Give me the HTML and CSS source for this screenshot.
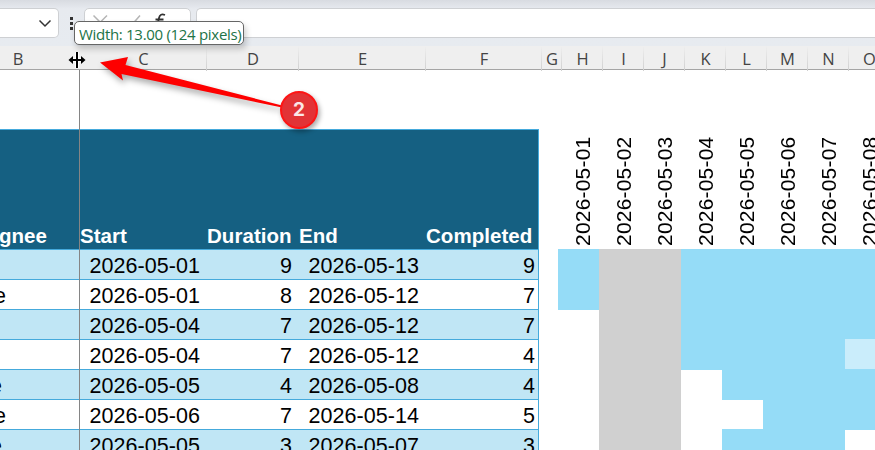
FILE: index.html
```html
<!DOCTYPE html>
<html lang="en">
<head>
<meta charset="utf-8">
<title>Project schedule</title>
<link rel="stylesheet" href="styles.css">
</head>
<body>
<div class="app">
  <div class="formula-bar">
    <div class="box name-box"><svg width="14" height="9" viewBox="0 0 14 9"><path d="M1.500 1.500 7 7l5.500-5.500" fill="none" stroke="#333" stroke-width="1.500"/></svg></div>
    <div class="dots"><i></i><i></i><i></i></div>
    <div class="box fx-box">
      <svg width="104" height="27" viewBox="0 0 104 27"><path d="M8.500 6.500 22 20M22 6.500 8.500 20M40 14l4 5L55 6.500" fill="none" stroke="#b5b5b5" stroke-width="1.500"/><path d="M80 6q-5-2-6 3l-2 9M70.500 10.500h8" fill="none" stroke="#333" stroke-width="1.800"/></svg>
    </div>
    <div class="box input-box"></div>
  </div>
  <div class="col-heads">
    <div class="first">B</div><div>C</div><div>D</div><div>E</div><div>F</div><div>G</div><div>H</div><div>I</div><div>J</div><div>K</div><div>L</div><div>M</div><div>N</div><div>O</div>
  </div>
  <div class="sheet">
    <div class="table">
      <div class="row thead"><span class="assignee">Assignee</span><span>Start</span><span>Duration</span><span>End</span><span>Completed</span></div>
      <div class="row band"><span></span><span>2026-05-01</span><span>9</span><span>2026-05-13</span><span>9</span></div>
      <div class="row"><span class="name">e</span><span>2026-05-01</span><span>8</span><span>2026-05-12</span><span>7</span></div>
      <div class="row band"><span></span><span>2026-05-04</span><span>7</span><span>2026-05-12</span><span>7</span></div>
      <div class="row"><span></span><span>2026-05-04</span><span>7</span><span>2026-05-12</span><span>4</span></div>
      <div class="row band"><span class="name short">e</span><span>2026-05-05</span><span>4</span><span>2026-05-08</span><span>4</span></div>
      <div class="row"><span class="name">e</span><span>2026-05-06</span><span>7</span><span>2026-05-14</span><span>5</span></div>
      <div class="row band"><span class="name short">e</span><span>2026-05-05</span><span>3</span><span>2026-05-07</span><span>3</span></div>
    </div>
    <div class="gantt">
      <div class="day"><time>2026-05-01</time><b class="r2"></b></div>
      <div class="day"><time>2026-05-02</time><b class="off"></b></div>
      <div class="day"><time>2026-05-03</time><b class="off"></b></div>
      <div class="day"><time>2026-05-04</time><b class="r4"></b></div>
      <div class="day"><time>2026-05-05</time><b class="r5"></b><b class="gap"></b><b class="rest"></b></div>
      <div class="day"><time>2026-05-06</time><b class="rest"></b></div>
      <div class="day"><time>2026-05-07</time><b class="rest"></b></div>
      <div class="day"><time>2026-05-08</time><b class="r3"></b><b class="light"></b><b class="r2"></b></div>
    </div>
  </div>
  <div class="guide"></div>
  <svg class="arrow" width="240" height="90" viewBox="90 50 240 90"><path d="M100 62.500 128 57l-2.500 8L282 105.500v2L121.500 74l1.500 6.500Z" fill="#fe0000"/></svg>
  <div class="badge">2</div>
  <div class="tooltip"><span>Width: 13.00 (124 pixels)</span></div>
  <svg class="cursor" width="20" height="20" viewBox="0 0 20 20"><g stroke="#fff" stroke-width="4" fill="#fff"><path d="M10 2v16M4 10h12"/></g><path d="M10 2v16M3 10h14" stroke="#000" stroke-width="2"/><path d="M1.500 10 6 6v8ZM18.500 10 14 6v8Z"/></svg>
</div>
</body>
</html>
```
FILE: styles.css
```css
* { box-sizing: border-box; }
body { margin: 0; background: #fff; }
.app { position: relative; width: 875px; height: 450px; overflow: hidden; font-family: "Liberation Sans", sans-serif; }
.formula-bar { display: flex; align-items: flex-start; height: 46px; padding-top: 8px; background: linear-gradient(#d8dbe1, #e7eaef 9px, #e7ebf0); }
.box { height: 30px; background: #fff; border: 1px solid #ced0d3; border-radius: 5px; }
.name-box { width: 59px; border-left: 0; border-radius: 0 5px 5px 0; display: flex; justify-content: flex-end; align-items: center; padding-right: 6px; }
.dots { width: 25px; padding: 9px 0 0 11px; display: grid; gap: 2px; }
.dots i { width: 3px; height: 3px; background: #333; }
.fx-box { width: 107px; overflow: hidden; }
.input-box { flex: 1; margin-left: 5px; border-right: 0; border-radius: 5px 0 0 5px; }
.col-heads { display: grid; grid-template-columns: 80px 127px 92px 127px 116px 20px repeat(8, 41px); height: 24px; background: #efefef; border-bottom: 1px solid #a5a5a5; color: #444; font: 16.5px/25px "Open Sans", sans-serif; text-align: center; }
.col-heads div { background: linear-gradient(#efefef, #cfcfcf) right / 1px 100% no-repeat; }
.col-heads .first { padding-right: 44px; background: none; }
.sheet { display: flex; padding-top: 59px; }
.table { width: 539px; border-top: 1px solid #45aadc; border-right: 1px solid #45aadc; }
.row { display: grid; grid-template-columns: 80px 120px 92px 127px 116px; height: 30px; border-bottom: 1px solid #45aadc; font-size: 21.5px; line-height: 32px; letter-spacing: .05px; text-align: right; white-space: nowrap; color: #000; }
.row.band { background: #c0e6f5; }
.row.thead { height: 120px; grid-template-columns: 80px 127px 92px 127px 112px; align-items: end; background: #156082; color: #fff; font: bold 20.5px/27px "Liberation Sans", sans-serif; text-align: left; }
.thead .assignee { width: 47px; display: flex; justify-content: flex-end; }
.row .name { width: 6px; display: flex; justify-content: flex-end; }
.row .name.short { width: 2px; }
.gantt { display: flex; margin-left: 19px; }
.day { width: 41px; flex: none; display: flex; flex-direction: column; height: 321px; }
.day time { height: 120px; width: 41px; writing-mode: vertical-rl; transform: rotate(180deg); font-size: 21px; line-height: 49px; letter-spacing: .2px; padding-top: 3px; }
.day b { display: block; flex: none; width: 41px; background: #95dcf7; }
.day .off { flex: 1; background: #d0d0d0; }
.day .r2 { height: 61px; }
.day .r3 { height: 90px; }
.day .r4 { height: 121px; }
.day .r5 { height: 151px; }
.day .gap { height: 29px; background: #fff; }
.day .rest { flex: 1; }
.day .light { height: 30px; background: #caedfb; }
.guide { position: absolute; left: 79px; top: 70px; width: 1px; bottom: 0; background: #858585; }
.arrow { position: absolute; left: 90px; top: 50px; filter: drop-shadow(2px 4px 3px #0005); }
.badge { position: absolute; left: 280px; top: 91px; width: 38px; height: 38px; border: 2px solid #fe1515; border-radius: 50%; background: #e23336; color: #fbe7e7; font: bold 19px/34px Inter, sans-serif; text-align: center; box-shadow: 2px 3px 5px #0005; }
.tooltip { position: absolute; left: 74px; top: 21px; width: 170px; height: 24px; border: 1px solid #666; border-radius: 5px; background: #fff; box-shadow: 2px 4px 6px #0003; padding-left: 4px; color: #217346; font: 15px/24px "Open Sans", sans-serif; letter-spacing: -.3px; white-space: nowrap; }
.cursor { position: absolute; left: 67px; top: 50px; }
```
